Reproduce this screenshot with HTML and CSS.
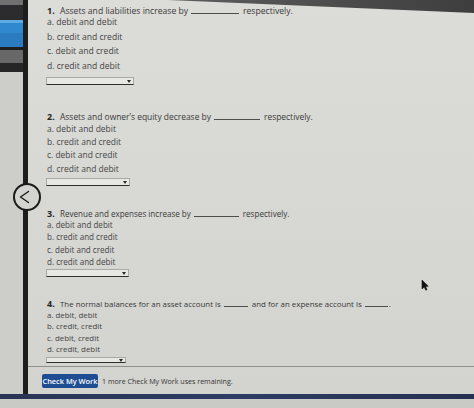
FILE: index.html
```html
<!DOCTYPE html>
<html lang="en">
<head>
<meta charset="utf-8">
<title>Check My Work</title>
<link rel="stylesheet" href="styles.css">
</head>
<body>
<div class="screen">
  <div class="rail">
    <div class="band band-grey"></div>
    <div class="band band-dark"></div>
    <div class="band band-blue"></div>
    <div class="band band-line"></div>
    <div class="band band-grey2"></div>
    <div class="band band-dark2"></div>
    <div class="band band-light"></div>
  </div>
  <div class="divider">
    <button class="back" type="button" aria-label="Back">
      <svg width="28" height="28" viewBox="0 0 28 28"><path d="M15.5 8.5 L7.5 14 L15.5 19.5" fill="none" stroke="#1a1a1a" stroke-width="1.4" stroke-linecap="round" stroke-linejoin="round"/></svg>
    </button>
  </div>
  <main class="content">
    <div class="questions">
      <section class="q q1">
        <p class="q-title"><span class="q-num">1.</span>Assets and liabilities increase by<span class="blank"></span>respectively.</p>
        <ul class="opts">
          <li>a. debit and debit</li>
          <li>b. credit and credit</li>
          <li>c. debit and credit</li>
          <li>d. credit and debit</li>
        </ul>
        <div class="select"><span class="caret"></span></div>
      </section>
      <section class="q q2">
        <p class="q-title"><span class="q-num">2.</span>Assets and owner’s equity decrease by<span class="blank"></span>respectively.</p>
        <ul class="opts">
          <li>a. debit and debit</li>
          <li>b. credit and credit</li>
          <li>c. debit and credit</li>
          <li>d. credit and debit</li>
        </ul>
        <div class="select"><span class="caret"></span></div>
      </section>
      <section class="q q3">
        <p class="q-title"><span class="q-num">3.</span>Revenue and expenses increase by<span class="blank"></span>respectively.</p>
        <ul class="opts">
          <li>a. debit and debit</li>
          <li>b. credit and credit</li>
          <li>c. debit and credit</li>
          <li>d. credit and debit</li>
        </ul>
        <div class="select"><span class="caret"></span></div>
      </section>
      <section class="q q4">
        <p class="q-title"><span class="q-num">4.</span>The normal balances for an asset account is<span class="blank"></span>and for an expense account is<span class="blank blank-b"></span>.</p>
        <ul class="opts">
          <li>a. debit, debit</li>
          <li>b. credit, credit</li>
          <li>c. debit, credit</li>
          <li>d. credit, debit</li>
        </ul>
        <div class="select"><span class="caret"></span></div>
      </section>
    </div>
    <footer class="actions">
      <button class="check" type="button">Check My Work</button>
      <span class="remaining">1 more Check My Work uses remaining.</span>
    </footer>
    <svg class="pointer" width="8" height="12" viewBox="0 0 8 12"><path d="M1 1 L1 10 L3.2 8 L4.8 11.2 L6 10.6 L4.5 7.5 L7.2 7.3 Z" fill="#111" stroke="#111" stroke-width="0.6" stroke-linejoin="round"/></svg>
  </main>
</div>
<div class="bezel"></div>
</body>
</html>
```
FILE: styles.css
```css
* { box-sizing: border-box; }

body {
  margin: 0;
  width: 474px;
  height: 408px;
  overflow: hidden;
  background: #c9c9c5;
  font-family: "Open Sans", "DejaVu Sans", sans-serif;
}

.screen {
  display: flex;
  height: 394px;
}

/* left rail */
.rail {
  width: 23px;
  display: flex;
  flex-direction: column;
}
.band-grey { height: 5px; background: #707070; }
.band-dark { height: 15px; background: #2c2c2e; }
.band-blue { height: 27px; background: linear-gradient(#5eaae2 0 3px, #3089cf 3px 13px, #2a7bc0 13px); }
.band-line { height: 3px; background: #1d1d1d; }
.band-grey2 { height: 13px; background: #686868; }
.band-dark2 { height: 9px; background: #262626; }
.band-light { flex: 1; background: #cdcdc9; }

.divider {
  width: 5px;
  background: #1d1d1d;
  position: relative;
  z-index: 2;
}
.back {
  position: absolute;
  left: -10px;
  top: 183px;
  width: 28px;
  height: 28px;
  padding: 0;
  border: 2px solid #1b1b1b;
  border-radius: 50%;
  background: #d3d3cf;
  display: flex;
  align-items: center;
  justify-content: center;
}
.back svg { display: block; flex: none; }

/* main area */
.content {
  flex: 1;
  position: relative;
  background: linear-gradient(#dcdcd8, #d3d3cf);
  display: flex;
  flex-direction: column;
}
.content::before {
  content: "";
  position: absolute;
  left: 0;
  right: 0;
  top: 0;
  height: 14px;
  background: linear-gradient(90deg, #6c6c6c, #3e3e3e);
  clip-path: polygon(140px 0, 100% 0, 100% 13px);
}

.questions {
  flex: 1;
  padding: 6px 0 0 19px;
  overflow: hidden;
}

.q { --fs: 8.6px; --lh: 14.7px; --pull: 0px; --gap: 0px; --sel: 88px; --sel-top: 3px; --sel-h: 8px; --blank: 48px; }
.q2 { --fs: 8.45px; --lh: 13.3px; --pull: 0.5px; --gap: 27.5px; --sel: 84px; --sel-top: 2.5px; --blank: 46px; }
.q3 { --fs: 8.05px; --lh: 12.3px; --pull: 1.5px; --gap: 23px; --sel: 83px; --sel-top: 1px; --blank: 45px; }
.q4 { --fs: 7.9px; --lh: 11.3px; --pull: 2px; --gap: 22px; --sel: 80px; --sel-top: 1.5px; --sel-h: 6px; --blank: 24px; }

.q { margin-top: var(--gap); }

.q-title {
  margin: 0;
  height: 9px;
  line-height: 9px;
  font-size: var(--fs);
  color: #393939;
  white-space: nowrap;
}
.q-num {
  display: inline-block;
  width: 13px;
  font-size: 9px;
  font-weight: 700;
  color: #262626;
}
.blank {
  display: inline-block;
  width: var(--blank);
  height: 1px;
  border-bottom: 1px solid #4e4e4e;
  margin: 0 4px 0 3px;
}
.blank-b { width: 23px; margin: 0 1px 0 3px; }

.opts {
  list-style: none;
  margin: var(--pull) 0 0;
  padding: 0;
  font-size: var(--fs);
  line-height: var(--lh);
  color: #454545;
  white-space: nowrap;
}

.select {
  position: relative;
  width: var(--sel);
  height: var(--sel-h);
  margin-top: var(--sel-top);
  margin-left: -1px;
  background: #e7e7e3;
  border: 1px solid #a9a9a5;
  border-bottom: 1px solid #2e2e2e;
}
.caret {
  position: absolute;
  right: 2px;
  top: 50%;
  margin-top: -1px;
  border-left: 2px solid transparent;
  border-right: 2px solid transparent;
  border-top: 3px solid #2a2a2a;
}

/* footer */
.actions {
  height: 28px;
  border-top: 1px solid #8f8f8b;
  display: flex;
  align-items: flex-start;
  gap: 4px;
  padding: 7px 0 0 14px;
}
.check {
  width: 56px;
  height: 14px;
  padding: 0;
  border: none;
  border-radius: 2px;
  background: #1e4d93;
  color: #ffffff;
  font-family: "Open Sans", sans-serif;
  font-size: 7.4px;
  font-weight: 600;
  line-height: 14px;
}
.remaining {
  font-size: 7.1px;
  line-height: 14px;
  color: #333333;
  white-space: nowrap;
}

.pointer {
  position: absolute;
  left: 393px;
  top: 279px;
}

.bezel {
  height: 5px;
  background: linear-gradient(90deg, #2a3555, #2c3c64 50%, #263150);
}
```
